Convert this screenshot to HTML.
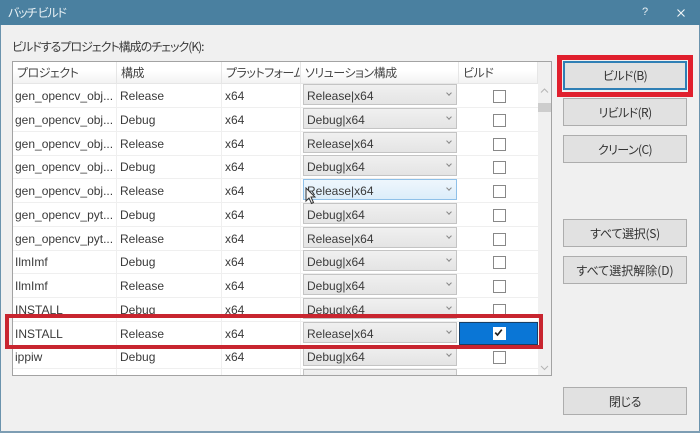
<!DOCTYPE html>
<html lang="ja"><head><meta charset="utf-8"><title>バッチ ビルド</title>
<style>
html,body{margin:0;padding:0}
body{width:700px;height:433px;overflow:hidden;position:relative;background:#f0f0f0;font-family:"Liberation Sans","Noto Sans CJK JP",sans-serif;font-size:12px;color:#3a3a3a}
div,span{box-sizing:border-box}
.abs{position:absolute}
.jp{font-family:"Noto Sans CJK JP","Liberation Sans",sans-serif;font-feature-settings:"palt";font-size:12px;white-space:nowrap}
#tb{left:0;top:0;width:700px;height:25px;background:#4a80a0;color:#e8f0f4}
#t{left:12px;top:61px;width:540px;height:315px;border:1px solid #a3a3a3;background:#fff;overflow:hidden}
.h{position:absolute;top:0;height:22px;line-height:21px;background:linear-gradient(#fff 40%,#f3f3f3);border-right:1px solid #e6e6e6;border-bottom:1px solid #e6e6e6;padding-left:4px;color:#444;letter-spacing:-.5px;overflow:hidden}
.r{position:absolute;left:0;width:525px;height:24px;border-bottom:1px solid #efefef}
.r span{position:absolute;top:0;line-height:25px;white-space:nowrap}
.n{left:2px}.c{left:107px}.p{left:212px}
.s{position:absolute;top:0;width:1px;height:293px;background:#efefef}
.cb{position:absolute;left:290px;top:1px;width:154px;height:21px;background:linear-gradient(#f0f0f0,#e4e4e4);border:1px solid #c4c4c4;line-height:22px!important;padding-left:3px;display:block}
.cb::after{content:"";position:absolute;right:5px;top:6px;width:3px;height:3px;border-right:1px solid #888;border-bottom:1px solid #888;transform:rotate(45deg)}
.hv{background:linear-gradient(#eef6fc,#dcedfa);border-color:#8fc0e8}
.k{position:absolute;left:480px;top:6px;width:11px;height:11px;background:#fff;border:1px solid #888}
.b{position:absolute;left:563px;width:124px;height:28px;background:#e1e1e1;border:1px solid #adadad;text-align:center;line-height:27px;color:#333;letter-spacing:-.3px}
</style></head><body>
<div class="abs" id="tb"><span class="abs jp" style="left:8px;top:4px;line-height:17px;letter-spacing:-1.2px">バッチ ビルド</span>
<span class="abs" style="left:642px;top:5px;font-size:11px;line-height:15px">?</span>
<svg class="abs" style="left:677px;top:9px" width="8" height="8"><path d="M.5 .5L7.5 7.5M7.5 .5L.5 7.5" stroke="#f2f6f8" stroke-width="1.1" fill="none"/></svg></div>
<div class="abs" style="left:0;top:25px;width:1px;height:408px;background:#6b93ad"></div>
<div class="abs" style="right:0;top:25px;width:1px;height:408px;background:#6b93ad"></div>
<div class="abs" style="left:0;top:431px;width:700px;height:2px;background:#7d9db3"></div>
<div class="abs jp" style="left:12px;top:39px;line-height:16px;letter-spacing:-1px">ビルドするプロジェクト構成のチェック(K):</div>

<div class="abs" id="t">
<div class="h jp" style="left:0;width:104px">プロジェクト</div>
<div class="h jp" style="left:104px;width:105px">構成</div>
<div class="h jp" style="left:209px;width:79px">プラットフォーム</div>
<div class="h jp" style="left:288px;width:158px">ソリューション構成</div>
<div class="h jp" style="left:446px;width:79px">ビルド</div>
<div class="s" style="left:103px;top:22px"></div><div class="s" style="left:208px;top:22px"></div><div class="s" style="left:287px;top:22px"></div>

<div class="r" style="top:22px"><span class="n">gen_opencv_obj...</span><span class="c">Release</span><span class="p">x64</span><span class="cb">Release|x64</span><i class="k"></i></div>
<div class="r" style="top:45.75px"><span class="n">gen_opencv_obj...</span><span class="c">Debug</span><span class="p">x64</span><span class="cb">Debug|x64</span><i class="k"></i></div>
<div class="r" style="top:69.5px"><span class="n">gen_opencv_obj...</span><span class="c">Release</span><span class="p">x64</span><span class="cb">Release|x64</span><i class="k"></i></div>
<div class="r" style="top:93.25px"><span class="n">gen_opencv_obj...</span><span class="c">Debug</span><span class="p">x64</span><span class="cb">Debug|x64</span><i class="k"></i></div>
<div class="r" style="top:117px"><span class="n">gen_opencv_obj...</span><span class="c">Release</span><span class="p">x64</span><span class="cb hv">Release|x64</span><i class="k"></i></div>
<div class="r" style="top:140.75px"><span class="n">gen_opencv_pyt...</span><span class="c">Debug</span><span class="p">x64</span><span class="cb">Debug|x64</span><i class="k"></i></div>
<div class="r" style="top:164.5px"><span class="n">gen_opencv_pyt...</span><span class="c">Release</span><span class="p">x64</span><span class="cb">Release|x64</span><i class="k"></i></div>
<div class="r" style="top:188.25px"><span class="n">IlmImf</span><span class="c">Debug</span><span class="p">x64</span><span class="cb">Debug|x64</span><i class="k"></i></div>
<div class="r" style="top:212px"><span class="n">IlmImf</span><span class="c">Release</span><span class="p">x64</span><span class="cb">Debug|x64</span><i class="k"></i></div>
<div class="r" style="top:235.75px"><span class="n">INSTALL</span><span class="c">Debug</span><span class="p">x64</span><span class="cb">Debug|x64</span><i class="k"></i></div>
<div class="r" style="top:259.5px"><span class="n">INSTALL</span><span class="c">Release</span><span class="p">x64</span><span class="cb">Release|x64</span>
<div style="position:absolute;left:446px;top:0;width:79px;height:23px;background:#0a76d6;border:1px solid #173f66"></div>
<i class="k" style="border-color:#fff;top:5px"></i>
<svg style="position:absolute;left:481px;top:6px" width="9" height="9"><path d="M1.2 4.6L3.5 7L7.8 1.6" stroke="#222" stroke-width="1.7" fill="none"/></svg></div>
<div class="r" style="top:283.25px"><span class="n">ippiw</span><span class="c">Debug</span><span class="p">x64</span><span class="cb">Debug|x64</span><i class="k"></i></div>
<div class="r" style="top:307px;border:0"><span class="cb"></span></div>

<div class="abs" style="left:525px;top:0;width:13px;height:313px;background:#f0f0f0"></div>
<div class="abs" style="left:525px;top:41px;width:13px;height:9px;background:#cdcdcd"></div>
<svg class="abs" style="left:527px;top:26px" width="9" height="6"><path d="M1 4.5L4.5 1L8 4.5" stroke="#b5b5b5" fill="none"/></svg>
<svg class="abs" style="left:527px;top:303px" width="9" height="6"><path d="M1 1L4.5 4.5L8 1" stroke="#b5b5b5" fill="none"/></svg>
</div>

<div class="abs" style="left:5px;top:314px;width:538px;height:35px;border:4px solid #c8252f"></div>

<svg class="abs" style="left:305px;top:187px" width="12" height="18"><path d="M1 1V14L4 11L6.5 16.5L8.5 15.5L6 10H10Z" fill="#f4f4f4" stroke="#333" stroke-width="1"/></svg>

<div class="abs" style="left:557px;top:55px;width:136px;height:42px;border:5px solid #e01f2d"></div>
<div class="b jp" style="top:61px;height:29px;border:2px solid #2f7fb5;line-height:26px;letter-spacing:-.6px">ビルド(B)</div>
<div class="b jp" style="top:98px;letter-spacing:-.6px">リビルド(R)</div>
<div class="b jp" style="top:135px;letter-spacing:-.6px">クリーン(C)</div>
<div class="b jp" style="top:219px">すべて選択(S)</div>
<div class="b jp" style="top:256px;letter-spacing:0">すべて選択解除(D)</div>
<div class="b jp" style="top:387px">閉じる</div>
</body></html>
